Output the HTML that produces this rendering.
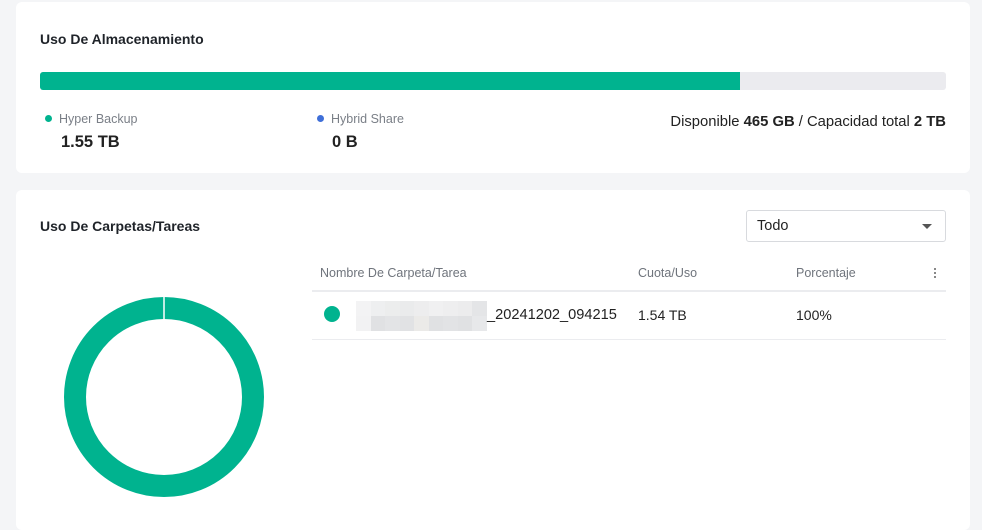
<!DOCTYPE html>
<html><head><meta charset="utf-8"><style>
*{margin:0;padding:0;box-sizing:border-box}
body{width:982px;height:515px;background:#f4f5f7;font-family:"Liberation Sans",Roboto,sans-serif;color:#222;position:relative;overflow:hidden}
.card{position:absolute;left:16px;width:954px;background:#fff;border-radius:6px}
.abs{position:absolute;white-space:nowrap}
.t{font-size:14px;font-weight:bold;color:#1f2329}
.lab{font-size:12.5px;color:#7a7f87}
.val{font-size:16.5px;font-weight:bold;color:#222}
.dot{display:inline-block;width:7px;height:7px;border-radius:50%;margin-right:7px;vertical-align:1px}
.th{font-size:12.5px;color:#6f747c}
.td{font-size:14px;color:#222}
</style></head><body>
<div class="card" style="top:2px;height:171px">
  <div class="abs t" style="left:24px;top:29px">Uso De Almacenamiento</div>
  <div class="abs" style="left:24px;top:70px;width:906px;height:18px;background:#ebebef;border-radius:3px;overflow:hidden"><div style="width:700px;height:18px;background:#00b38f"></div></div>
  <div class="abs lab" style="left:29px;top:110px"><span class="dot" style="background:#00b38f"></span>Hyper Backup</div>
  <div class="abs val" style="left:45px;top:131px">1.55 TB</div>
  <div class="abs lab" style="left:301px;top:110px"><span class="dot" style="background:#3f6fd8"></span>Hybrid Share</div>
  <div class="abs val" style="left:316px;top:131px">0 B</div>
  <div class="abs" style="right:24px;top:112px;font-size:14.8px;color:#222">Disponible <b>465 GB</b> / Capacidad total <b>2 TB</b></div>
</div>
<div class="card" style="top:190px;height:340px">
  <div class="abs t" style="left:24px;top:28px">Uso De Carpetas/Tareas</div>
  <div class="abs" style="left:730px;top:20px;width:200px;height:32px;border:1px solid #d8dade;border-radius:3px">
    <span class="abs" style="left:10px;top:7px;font-size:14.5px;color:#222">Todo</span>
    <span class="abs" style="right:13px;top:13px;width:0;height:0;border-left:5px solid transparent;border-right:5px solid transparent;border-top:5px solid #555"></span>
  </div>
  <div class="abs th" style="left:304px;top:76px">Nombre De Carpeta/Tarea</div>
  <div class="abs th" style="left:622px;top:76px">Cuota/Uso</div>
  <div class="abs th" style="left:780px;top:76px">Porcentaje</div>
  <div class="abs" style="left:918px;top:78px;width:2px">
    <div style="width:2px;height:2px;background:#888;margin-bottom:2px"></div><div style="width:2px;height:2px;background:#888;margin-bottom:2px"></div><div style="width:2px;height:2px;background:#888"></div>
  </div>
  <div class="abs" style="left:296px;top:100px;width:634px;height:2px;background:#ebecef"></div>
  <div class="abs" style="left:308px;top:116px;width:16px;height:16px;border-radius:50%;background:#00b38f"></div>
  <div class="abs" style="left:340px;top:111px;width:131px;height:30px;display:grid;grid-template-columns:repeat(9,1fr);grid-template-rows:1fr 1fr">
    <div style="background:#f3f3f4"></div><div style="background:#eeeff0"></div><div style="background:#eceded"></div><div style="background:#eaebec"></div><div style="background:#ededee"></div><div style="background:#f0f0f1"></div><div style="background:#eeeeef"></div><div style="background:#ececed"></div><div style="background:#e4e5e7"></div>
    <div style="background:#f2f2f3"></div><div style="background:#e0e1e3"></div><div style="background:#e3e4e6"></div><div style="background:#e1e2e4"></div><div style="background:#ebeae8"></div><div style="background:#e0e1e3"></div><div style="background:#e2e3e5"></div><div style="background:#e0e1e3"></div><div style="background:#e7e8ea"></div>
  </div>
  <div class="abs td" style="left:471px;top:117px;font-size:14.6px">_20241202_094215</div>
  <div class="abs td" style="left:622px;top:117px">1.54 TB</div>
  <div class="abs td" style="left:780px;top:117px">100%</div>
  <div class="abs" style="left:296px;top:149px;width:634px;height:1px;background:#ebecef"></div>
  <svg class="abs" style="left:48px;top:107px" width="200" height="200" viewBox="0 0 200 200">
    <circle cx="100" cy="100" r="89" fill="none" stroke="#00b38f" stroke-width="22"/>
    <line x1="100" y1="0" x2="100" y2="22" stroke="#fff" stroke-width="1.5"/>
  </svg>
</div>
</body></html>
